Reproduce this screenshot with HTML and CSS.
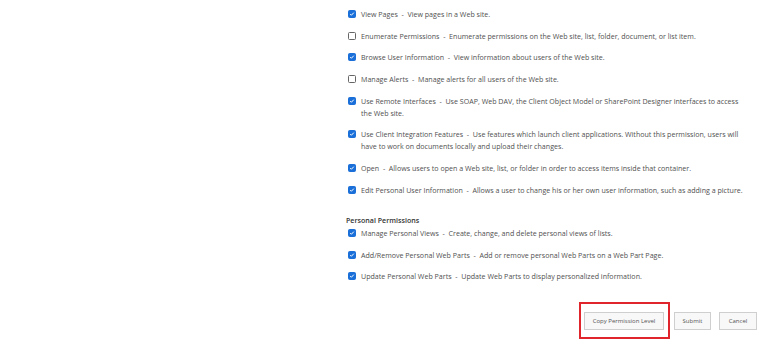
FILE: index.html
```html
<!DOCTYPE html>
<html>
<head>
    <meta charset="utf-8" />
    <title>Permission Level</title>
    <link rel="stylesheet" href="styles.css">
</head>
<body>
    <div class="main">
        <div class="perm-list">
            <div class="perm-item">
                <span class="box checked"></span>
                <span class="perm-text">View Pages&nbsp; - &nbsp;View pages in a Web site.</span>
            </div>
            <div class="perm-item">
                <span class="box"></span>
                <span class="perm-text">Enumerate Permissions&nbsp; - &nbsp;Enumerate permissions on the Web site, list, folder, document, or list item.</span>
            </div>
            <div class="perm-item">
                <span class="box checked"></span>
                <span class="perm-text">Browse User Information&nbsp; - &nbsp;View information about users of the Web site.</span>
            </div>
            <div class="perm-item">
                <span class="box"></span>
                <span class="perm-text">Manage Alerts&nbsp; - &nbsp;Manage alerts for all users of the Web site.</span>
            </div>
            <div class="perm-item">
                <span class="box checked"></span>
                <span class="perm-text">Use Remote Interfaces&nbsp; - &nbsp;Use SOAP, Web DAV, the Client Object Model or SharePoint Designer interfaces to access the Web site.</span>
            </div>
            <div class="perm-item">
                <span class="box checked"></span>
                <span class="perm-text">Use Client Integration Features&nbsp; - &nbsp;Use features which launch client applications. Without this permission, users will have to work on documents locally and upload their changes.</span>
            </div>
            <div class="perm-item">
                <span class="box checked"></span>
                <span class="perm-text">Open&nbsp; - &nbsp;Allows users to open a Web site, list, or folder in order to access items inside that container.</span>
            </div>
            <div class="perm-item">
                <span class="box checked"></span>
                <span class="perm-text">Edit Personal User Information&nbsp; - &nbsp;Allows a user to change his or her own user information, such as adding a picture.</span>
            </div>

            <div class="group-title">Personal Permissions</div>
            <div class="perm-item">
                <span class="box checked"></span>
                <span class="perm-text">Manage Personal Views&nbsp; - &nbsp;Create, change, and delete personal views of lists.</span>
            </div>
            <div class="perm-item">
                <span class="box checked"></span>
                <span class="perm-text">Add/Remove Personal Web Parts&nbsp; - &nbsp;Add or remove personal Web Parts on a Web Part Page.</span>
            </div>
            <div class="perm-item">
                <span class="box checked"></span>
                <span class="perm-text">Update Personal Web Parts&nbsp; - &nbsp;Update Web Parts to display personalized information.</span>
            </div>
        </div>

        <div class="actions">
            <div class="highlight">
                <button class="btn" id="btnCopy">Copy Permission Level</button>
            </div>
            <button class="btn" id="btnSubmit">Submit</button>
            <button class="btn" id="btnCancel">Cancel</button>
        </div>
    </div>
</body>
</html>
```

FILE: styles.css
```css
* {
    padding: 0;
    margin: 0;
    box-sizing: border-box;
}

body {
    background: #fff;
    font-family: "Open Sans", "Noto Sans", sans-serif;
    font-size: 7.1px;
    color: #505050;
}

.main {
    width: 768px;
    height: 344px;
    padding-top: 8px;
}

.perm-list {
    width: 404px;
    margin-left: 346px;
}

.perm-item {
    display: flex;
    align-items: flex-start;
    line-height: 12px;
    margin-bottom: 9.7px;
}

.box {
    flex: none;
    width: 8px;
    height: 8px;
    margin: 2px 5px 0 2px;
    border: 1px solid #666;
    border-radius: 1.5px;
    background: #fff;
}

.box.checked {
    border-color: #1a6fd8;
    background: #1a6fd8 url("data:image/svg+xml,%3Csvg xmlns='http://www.w3.org/2000/svg' viewBox='0 0 8 8'%3E%3Cpath d='M1.6 4.1 3.2 5.7 6.4 2.2' fill='none' stroke='%23fff' stroke-width='1.3'/%3E%3C/svg%3E") center / 100% no-repeat;
}

.perm-text {
    flex: 1;
}

.group-title {
    font-weight: 600;
    color: #333;
    line-height: 12px;
    margin-top: 18px;
    margin-bottom: 1px;
}

.actions {
    display: flex;
    justify-content: flex-end;
    align-items: center;
    width: 757px;
    margin-top: 20px;
}

.highlight {
    border: 2px solid #e0262c;
    padding: 8px 4px 7px 3px;
    margin-right: 4px;
}

.btn {
    font-family: "Open Sans", "Noto Sans", sans-serif;
    font-size: 6px;
    color: #555;
    background: #f8f8f8;
    border: 1px solid #cfcfcf;
    height: 18px;
    padding: 0;
    white-space: nowrap;
}

#btnCopy {
    width: 80px;
}

#btnSubmit {
    width: 37px;
    margin-right: 8px;
}

#btnCancel {
    width: 38px;
}
```
